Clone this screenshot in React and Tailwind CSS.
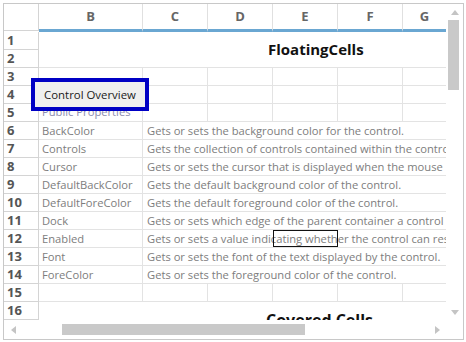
const COLS = ['B', 'C', 'D', 'E', 'F', 'G']

const PROPS = [
  ['BackColor', 'Gets or sets the background color for the control.'],
  ['Controls', 'Gets the collection of controls contained within the control.'],
  ['Cursor', 'Gets or sets the cursor that is displayed when the mouse pointer is over the control.'],
  ['DefaultBackColor', 'Gets the default background color of the control.'],
  ['DefaultForeColor', 'Gets the default foreground color of the control.'],
  ['Dock', 'Gets or sets which edge of the parent container a control is docked to.'],
  ['Enabled', 'Gets or sets a value indicating whether the control can respond to user interaction.'],
  ['Font', 'Gets or sets the font of the text displayed by the control.'],
  ['ForeColor', 'Gets or sets the foreground color of the control.'],
]

const grid = 'border-r border-b border-[#e3e3e3]'

function RowHead({ n }) {
  return (
    <div className="h-[18px] border-r border-b border-[#d4d4d4] pl-[3px] text-[13px] font-bold leading-[17px] text-[#555]">
      {n}
    </div>
  )
}

function EmptyCells({ from = 0 }) {
  return COLS.slice(from).map(c => (
    <div key={c} className={`h-[18px] ${c === 'G' ? 'border-b border-[#e3e3e3]' : grid}`} />
  ))
}

function Arrow({ dir }) {
  const pts = {
    up: '0,5 4,0 8,5',
    down: '0,0 8,0 4,5',
    left: '5,0 5,8 0,4',
    right: '0,0 0,8 5,4',
  }[dir]
  const vertical = dir === 'up' || dir === 'down'
  return (
    <svg width={vertical ? 8 : 5} height={vertical ? 5 : 8} viewBox={vertical ? '0 0 8 5' : '0 0 5 8'}>
      <polygon points={pts} fill="#c4c4c4" />
    </svg>
  )
}

export default function App() {
  return (
    <div className="w-[466px] h-[342px] bg-white pt-[3px] pl-[3px]" style={{ fontFamily: '"Open Sans", "Noto Sans", sans-serif' }}>
      <div className="w-[461px] h-[337px] border border-[#c8c8c8] flex">

        {/* sheet + horizontal scrollbar */}
        <div className="w-[442px] flex flex-col">
          <div className="relative h-[316px] overflow-hidden">
            {/* column headers */}
            <div className="grid grid-cols-[35px_104px_65px_65px_65px_65px_43px] h-[28px]">
              <div className="border-r border-b border-[#d4d4d4] h-[27px]" />
              {COLS.map(c => (
                <div
                  key={c}
                  className={`h-[28px] border-b-[3px] border-b-[#6aa7d2] ${c === 'G' ? '' : 'border-r border-r-[#e0e0e0]'} flex items-center justify-center text-[13px] font-bold text-[#666]`}
                >
                  {c}
                </div>
              ))}
            </div>

            <div className="grid grid-cols-[35px_104px_65px_65px_65px_65px_43px] auto-rows-[18px]">
              {/* 1-2 merged title */}
              <RowHead n={1} />
              <div className="col-span-6 row-span-2 border-b border-[#e3e3e3] flex items-center pl-[229px] text-[15px] font-bold text-[#111] whitespace-nowrap">
                FloatingCells
              </div>
              <RowHead n={2} />

              <RowHead n={3} />
              <EmptyCells />

              <RowHead n={4} />
              <EmptyCells />

              <RowHead n={5} />
              <div className={`${grid} pl-[3px] text-[11.2px] leading-[16px] text-[#8c8cae] whitespace-nowrap overflow-hidden`}>
                Public Properties
              </div>
              <EmptyCells from={1} />

              {PROPS.map(([name, desc], i) => (
                <div key={name} className="contents">
                  <RowHead n={i + 6} />
                  <div className={`${grid} pl-[3px] text-[11.2px] leading-[17px] text-[#7d7d7d] whitespace-nowrap overflow-hidden`}>
                    {name}
                  </div>
                  <div className="col-span-5 border-b border-[#e3e3e3] pl-[4px] text-[11.2px] leading-[17px] text-[#7d7d7d] whitespace-nowrap overflow-hidden">
                    {desc}
                  </div>
                </div>
              ))}

              <RowHead n={15} />
              <EmptyCells />

              <RowHead n={16} />
              <div className="col-span-6 relative">
                <span className="absolute left-[227px] top-[6px] text-[16px] font-bold text-[#111] whitespace-nowrap">
                  Covered Cells
                </span>
              </div>
            </div>

            {/* selection frame around B4 */}
            <div className="absolute left-[27px] top-[74px] w-[118px] h-[33px] border-4 border-[#0000c4] bg-[#efefef] flex items-center justify-center text-[11.4px] text-[#1a1a1a]">
              Control Overview
            </div>

            {/* active cell E12 */}
            <div className="absolute left-[269px] top-[226px] w-[65px] h-[17px] border border-[#111]" />
          </div>

          {/* horizontal scrollbar */}
          <div className="h-[19px] flex items-center">
            <div className="w-[18px] flex justify-center"><Arrow dir="left" /></div>
            <div className="ml-[40px] w-[243px] h-[11px] bg-[#c9c9c9]" />
            <div className="flex-1" />
            <div className="w-[18px] flex justify-center"><Arrow dir="right" /></div>
          </div>
        </div>

        {/* vertical scrollbar */}
        <div className="w-[17px] flex flex-col">
          <div className="h-[16px] flex items-center justify-center"><Arrow dir="up" /></div>
          <div className="ml-[2px] w-[11px] h-[70px] bg-[#c9c9c9]" />
          <div className="flex-1" />
          <div className="h-[16px] flex items-center justify-center"><Arrow dir="down" /></div>
          <div className="h-[19px]" />
        </div>
      </div>
    </div>
  )
}
